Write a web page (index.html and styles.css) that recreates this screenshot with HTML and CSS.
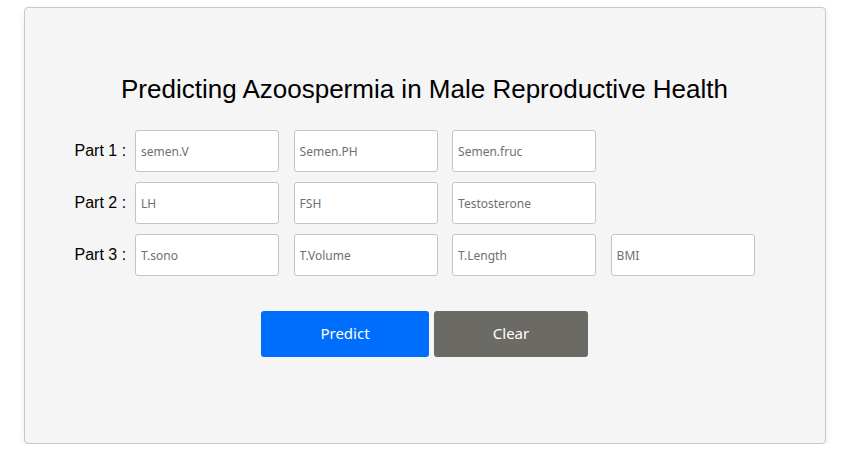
FILE: index.html
```html
<!DOCTYPE html>
<html>
<head>
    <meta charset="UTF-8">
    <meta name="viewport" content="width=device-width, initial-scale=1.0">
    <title>Azoospermia Prediction</title>
    <link rel="stylesheet" href="styles.css">
</head>
<body>
    <div class="container">
        <h1>Predicting Azoospermia in Male Reproductive Health</h1>

        <form class="form" onsubmit="return false">
            <!-- 第一部分 -->
            <div class="row">
                <label>Part 1 :</label>
                <div class="fields">
                    <input type="text" placeholder="semen.V">
                    <input type="text" placeholder="Semen.PH">
                    <input type="text" placeholder="Semen.fruc">
                </div>
            </div>

            <!-- 第二部分 -->
            <div class="row">
                <label>Part 2 :</label>
                <div class="fields">
                    <input type="text" placeholder="LH">
                    <input type="text" placeholder="FSH">
                    <input type="text" placeholder="Testosterone">
                </div>
            </div>

            <!-- 第三部分 -->
            <div class="row">
                <label>Part 3 :</label>
                <div class="fields">
                    <input type="text" placeholder="T.sono">
                    <input type="text" placeholder="T.Volume">
                    <input type="text" placeholder="T.Length">
                    <input type="text" placeholder="BMI">
                </div>
            </div>

            <div class="actions">
                <button type="submit" class="btn-predict">Predict</button>
                <button type="reset" class="btn-clear">Clear</button>
            </div>
        </form>
    </div>
</body>
</html>
```

FILE: styles.css
```css
body {
    margin: 0;
    background: #fff;
    font-family: "Liberation Sans", Arial, sans-serif;
}
.container {
    width: 802px;
    height: 437px;
    margin: 7px auto 0;
    padding: 66px 50px 0;
    box-sizing: border-box;
    background: #f5f5f5;
    border: 1px solid #c8c8c8;
    border-radius: 4px;
    box-shadow: 0 3px 8px rgba(0,0,0,0.08);
}
h1 {
    margin: 0 0 26px;
    font-size: 26px;
    line-height: 30px;
    font-weight: normal;
    text-align: center;
    color: #000;
}
.row {
    display: flex;
    align-items: center;
    margin-bottom: 10px;
}
.row label {
    font-size: 16px;
    color: #000;
    margin-right: 9px;
    white-space: nowrap;
}
.fields {
    display: flex;
    gap: 14.5px;
}
.fields input {
    width: 144px;
    height: 42px;
    box-sizing: border-box;
    padding: 0 5px;
    border: 1px solid #c4c4c4;
    border-radius: 3px;
    background: #fff;
    font-family: "Noto Sans", "Open Sans", sans-serif;
    font-size: 12px;
}
.fields input::placeholder {
    color: #707070;
}
.actions {
    display: flex;
    justify-content: center;
    gap: 5px;
    margin-top: 35px;
}
.actions button {
    height: 46px;
    padding: 0 0 3px;
    border: none;
    border-radius: 3px;
    color: #fff;
    font-family: "Noto Sans", "Open Sans", sans-serif;
    font-size: 15px;
    cursor: pointer;
}
.btn-predict {
    width: 168px;
    background: #006efc;
}
.btn-clear {
    width: 154px;
    background: #6c6a65;
}
```
